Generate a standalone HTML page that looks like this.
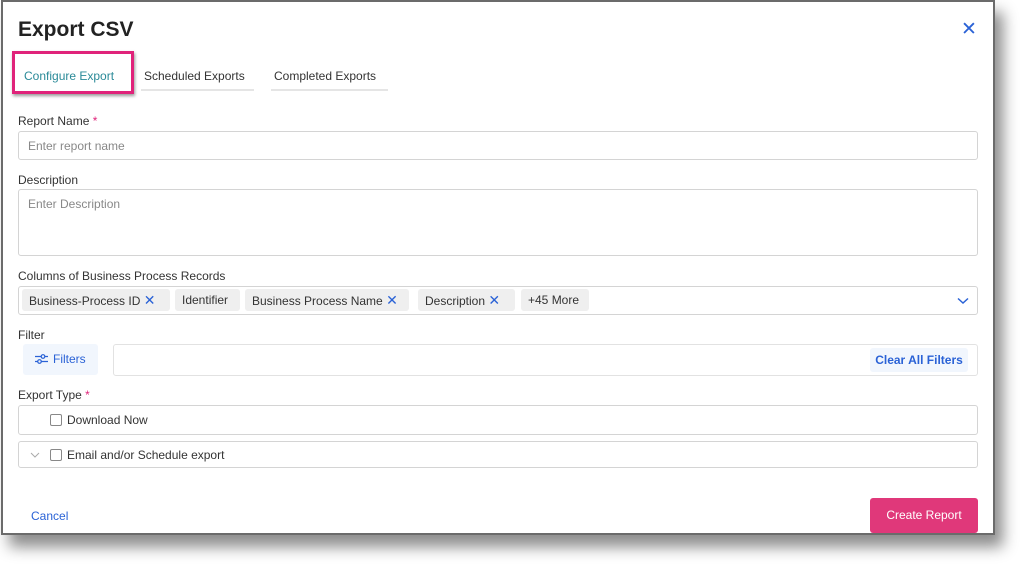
<!DOCTYPE html>
<html><head><style>
*{box-sizing:border-box;margin:0;padding:0}
body{width:1024px;height:564px;background:#fff;font-family:"Liberation Sans",sans-serif;position:relative;overflow:hidden;color:#333}
.modal{position:absolute;left:1px;top:0;width:994px;height:535px;background:#fff;border:2px solid #6b6b6b;box-shadow:8px 12px 14px rgba(0,0,0,.45)}
.a{position:absolute}
.lbl{font-size:12px;color:#333}
.box{position:absolute;border:1px solid #d4d4d4;border-radius:3px;background:#fff}
.ph{font-size:12px;color:#888}
.chip{position:absolute;top:289px;height:22px;background:#efefef;border-radius:3px;font-size:12px;color:#333;line-height:22px;padding-left:7px;white-space:nowrap}
.x{color:#2a62d6;font-size:14px}
.cb{display:inline-block;width:12px;height:12px;border:1px solid #888;border-radius:2px;vertical-align:-2px;margin-right:5px}
</style></head><body>
<div class="modal"></div>
<div class="a" style="left:18px;top:18px;font-size:21px;font-weight:bold;color:#222">Export CSV</div>
<div class="a" style="left:961px;top:18px;font-size:19px;color:#2a62d6">✕</div>
<div class="a" style="left:12px;top:51px;width:122px;height:43px;border:3px solid #e0237a;box-shadow:1px 2px 3px rgba(0,0,0,.4)"></div>
<div class="a" style="left:24px;top:69px;font-size:12px;color:#2a8a98">Configure Export</div>
<div class="a" style="left:141px;top:62px;width:113px;height:29px;border-bottom:2px solid #e5e5e5"></div>
<div class="a" style="left:144px;top:69px;font-size:12px;color:#333">Scheduled Exports</div>
<div class="a" style="left:271px;top:62px;width:117px;height:29px;border-bottom:2px solid #e5e5e5"></div>
<div class="a" style="left:274px;top:69px;font-size:12px;color:#333">Completed Exports</div>

<div class="a lbl" style="left:18px;top:114px">Report Name <span style="color:#e0237a">*</span></div>
<div class="box" style="left:18px;top:131px;width:960px;height:29px"><span class="a ph" style="left:9px;top:7px">Enter report name</span></div>
<div class="a lbl" style="left:18px;top:173px">Description</div>
<div class="box" style="left:18px;top:189px;width:960px;height:67px"><span class="a ph" style="left:9px;top:7px">Enter Description</span></div>
<div class="a lbl" style="left:18px;top:269px">Columns of Business Process Records</div>
<div class="box" style="left:18px;top:286px;width:960px;height:29px">
<svg class="a" style="right:8px;top:10px" width="12" height="8" viewBox="0 0 12 8"><path d="M1 1.5L6 6L11 1.5" fill="none" stroke="#2a62d6" stroke-width="1.5"/></svg></div>
<div class="chip" style="left:22px;width:148px">Business-Process ID <span class="x">✕</span></div>
<div class="chip" style="left:175px;width:65px">Identifier</div>
<div class="chip" style="left:245px;width:164px">Business Process Name <span class="x">✕</span></div>
<div class="chip" style="left:418px;width:97px">Description <span class="x">✕</span></div>
<div class="chip" style="left:521px;width:68px">+45 More</div>

<div class="a lbl" style="left:18px;top:328px">Filter</div>
<div class="a" style="left:23px;top:344px;width:75px;height:31px;background:#f1f6fd;border-radius:3px;color:#2a62d6;font-size:12px;line-height:31px;padding-left:30px">Filters</div>
<svg class="a" style="left:35px;top:353px" width="13" height="12" viewBox="0 0 13 12"><path d="M0 3.5H13M0 8.5H13" stroke="#2a62d6" stroke-width="1.3"/><circle cx="8" cy="3.5" r="1.8" fill="#f1f6fd" stroke="#2a62d6" stroke-width="1.2"/><circle cx="4.5" cy="8.5" r="1.8" fill="#f1f6fd" stroke="#2a62d6" stroke-width="1.2"/></svg>
<div class="box" style="left:113px;top:344px;width:865px;height:32px;border-color:#e2e2e2"></div>
<div class="a" style="left:870px;top:348px;width:98px;height:24px;background:#f1f6fd;border-radius:3px;color:#2a62d6;font-size:12px;font-weight:bold;line-height:24px;text-align:center">Clear All Filters</div>

<div class="a lbl" style="left:18px;top:388px">Export Type <span style="color:#e0237a">*</span></div>
<div class="box" style="left:18px;top:405px;width:960px;height:30px"><span class="a" style="left:31px;top:7px;font-size:12px;white-space:nowrap"><span class="cb"></span>Download Now</span></div>
<div class="box" style="left:18px;top:441px;width:960px;height:27px">
<svg class="a" style="left:11px;top:10px" width="10" height="6" viewBox="0 0 10 6"><path d="M1 1L5 5L9 1" fill="none" stroke="#aaa" stroke-width="1"/></svg>
<span class="a" style="left:31px;top:6px;font-size:12px;white-space:nowrap"><span class="cb"></span>Email and/or Schedule export</span></div>

<div class="a" style="left:31px;top:509px;font-size:12px;color:#2a62d6">Cancel</div>
<div class="a" style="left:870px;top:498px;width:108px;height:35px;background:#e0387a;border-radius:3px;color:#fff;font-size:12px;line-height:35px;text-align:center">Create Report</div>
</body></html>
